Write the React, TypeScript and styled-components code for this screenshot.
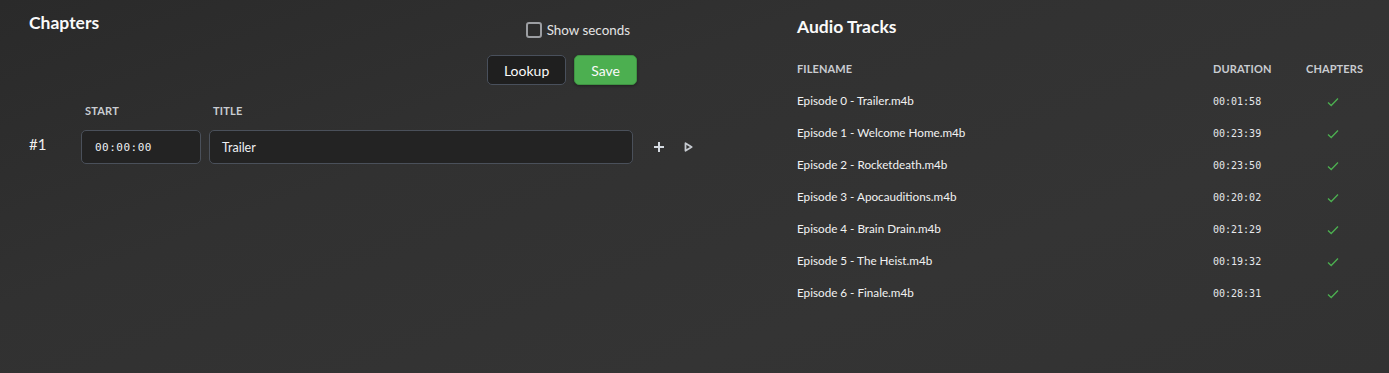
import React from 'react'
import styled, { createGlobalStyle } from 'styled-components'

const GlobalStyle = createGlobalStyle`
  html, body {
    margin: 0;
    padding: 0;
    background: #303030;
  }
  body {
    font-family: Lato, "Open Sans", sans-serif;
    color: #f0f0f0;
    -webkit-font-smoothing: antialiased;
  }
`

const Page = styled.div`
  width: 1389px;
  height: 373px;
  box-sizing: border-box;
  padding: 0 29px;
  display: grid;
  grid-template-columns: 1fr 563px;
  column-gap: 29px;
  background: linear-gradient(160deg, #2a2a2a 0%, #313131 35%, #343434 70%, #323232 100%);
  overflow: hidden;
`

const Column = styled.section`
  display: flex;
  flex-direction: column;
`

const Heading = styled.h2<{ $top: number }>`
  margin: ${p => p.$top}px 0 0;
  font-size: 17.5px;
  line-height: 24px;
  font-weight: 700;
  color: #fafafa;
`

const TopBar = styled.div`
  width: 608px;
  display: flex;
  justify-content: space-between;
  align-items: flex-start;
`

const Controls = styled.div`
  display: flex;
  flex-direction: column;
  align-items: flex-end;
  padding-top: 22px;
`

const CheckLabel = styled.label`
  display: flex;
  align-items: center;
  gap: 5px;
  margin-right: 7px;
  font-size: 13.4px;
  line-height: 16px;
  color: #e4e4e4;
`

const CheckBox = styled.span`
  width: 16px;
  height: 16px;
  box-sizing: border-box;
  border: 2px solid #9c9ea2;
  border-radius: 3px;
  background: #2c2c2c;
`

const ButtonRow = styled.div`
  display: flex;
  gap: 8px;
  margin-top: 17px;
`

const Button = styled.button<{ $primary?: boolean }>`
  height: 30px;
  padding: 0 16px;
  border-radius: 5px;
  font-family: inherit;
  font-size: 14px;
  color: #fafafa;
  border: 1px solid ${p => (p.$primary ? '#3f9443' : '#49505c')};
  background: ${p => (p.$primary ? '#4caf50' : '#1f1f1f')};
  box-shadow: ${p => (p.$primary ? '0 1px 3px rgba(0,0,0,0.35)' : 'none')};
`

const ChapterGrid = styled.div`
  margin-top: 16px;
  display: grid;
  grid-template-columns: 44px 120px 424px auto;
  column-gap: 8px;
  align-items: center;
`

const ColLabel = styled.div`
  font-size: 11px;
  font-weight: 700;
  letter-spacing: 0.2px;
  color: #c9ccd1;
  padding-left: 4px;
  height: 20px;
  line-height: 20px;
  margin-bottom: 9px;
`

const Spacer = styled.div``

const RowNumber = styled.div`
  font-size: 15px;
  color: #f0f0f0;
  margin-top: -7px;
`

const Field = styled.div<{ $mono?: boolean }>`
  height: 34px;
  box-sizing: border-box;
  border: 1px solid #4a505a;
  border-radius: 5px;
  background: #232323;
  display: flex;
  align-items: center;
  padding-left: ${p => (p.$mono ? '13px' : '12px')};
  font-family: ${p => (p.$mono ? '"DejaVu Sans Mono", monospace' : 'inherit')};
  font-size: ${p => (p.$mono ? '11px' : '12.5px')};
  letter-spacing: ${p => (p.$mono ? '0.5px' : '0')};
  color: #eef0f3;
`

const Actions = styled.div`
  display: flex;
  align-items: center;
  gap: 19px;
  padding-left: 12px;
  color: #d6d9de;
`

const TrackTable = styled.table`
  margin-top: 13px;
  border-collapse: collapse;
  width: 563px;
  table-layout: fixed;
`

const Th = styled.th<{ $align?: string }>`
  height: 32px;
  padding: 0;
  text-align: ${p => p.$align || 'left'};
  font-size: 11px;
  font-weight: 700;
  letter-spacing: 0.1px;
  color: #c9ccd1;
`

const Td = styled.td<{ $align?: string }>`
  height: 32px;
  padding: 0;
  text-align: ${p => p.$align || 'left'};
  font-size: 11.7px;
  color: #f2f2f2;
  vertical-align: middle;
`

const Duration = styled.span`
  font-family: "DejaVu Sans Mono", monospace;
  font-size: 10px;
  color: #e6e8eb;
`

const CheckMark = () => (
  <svg width="12" height="10" viewBox="0 0 12 10" style={{ display: 'inline-block', verticalAlign: 'middle' }}>
    <polyline points="1,5.5 4.2,8.5 11,1.5" fill="none" stroke="#4caf50" strokeWidth="1.3" />
  </svg>
)

const PlusIcon = () => (
  <svg width="12" height="12" viewBox="0 0 12 12">
    <path d="M6 1v10M1 6h10" stroke="#d6dbe2" strokeWidth="2" />
  </svg>
)

const PlayIcon = () => (
  <svg width="9" height="10" viewBox="0 0 9 10">
    <path d="M1.5 1.2L7.6 5L1.5 8.8Z" fill="none" stroke="#c6cad0" strokeWidth="1.8" strokeLinejoin="round" />
  </svg>
)

const tracks = [
  { name: 'Episode 0 - Trailer.m4b', duration: '00:01:58' },
  { name: 'Episode 1 - Welcome Home.m4b', duration: '00:23:39' },
  { name: 'Episode 2 - Rocketdeath.m4b', duration: '00:23:50' },
  { name: 'Episode 3 - Apocauditions.m4b', duration: '00:20:02' },
  { name: 'Episode 4 - Brain Drain.m4b', duration: '00:21:29' },
  { name: 'Episode 5 - The Heist.m4b', duration: '00:19:32' },
  { name: 'Episode 6 - Finale.m4b', duration: '00:28:31' },
]

const App = () => (
  <>
    <GlobalStyle />
    <Page>
      <Column>
        <TopBar>
          <Heading $top={11}>Chapters</Heading>
          <Controls>
            <CheckLabel>
              <CheckBox />
              Show seconds
            </CheckLabel>
            <ButtonRow>
              <Button>Lookup</Button>
              <Button $primary>Save</Button>
            </ButtonRow>
          </Controls>
        </TopBar>
        <ChapterGrid>
          <Spacer />
          <ColLabel>START</ColLabel>
          <ColLabel>TITLE</ColLabel>
          <Spacer />
          <RowNumber>#1</RowNumber>
          <Field $mono>00:00:00</Field>
          <Field>Trailer</Field>
          <Actions>
            <PlusIcon />
            <PlayIcon />
          </Actions>
        </ChapterGrid>
      </Column>
      <Column>
        <Heading $top={15}>Audio Tracks</Heading>
        <TrackTable>
          <colgroup>
            <col style={{ width: 416 }} />
            <col style={{ width: 93 }} />
            <col style={{ width: 54 }} />
          </colgroup>
          <thead>
            <tr>
              <Th>FILENAME</Th>
              <Th>DURATION</Th>
              <Th $align="center">CHAPTERS</Th>
            </tr>
          </thead>
          <tbody>
            {tracks.map(t => (
              <tr key={t.name}>
                <Td>{t.name}</Td>
                <Td>
                  <Duration>{t.duration}</Duration>
                </Td>
                <Td $align="center">
                  <CheckMark />
                </Td>
              </tr>
            ))}
          </tbody>
        </TrackTable>
      </Column>
    </Page>
  </>
)

export default App
